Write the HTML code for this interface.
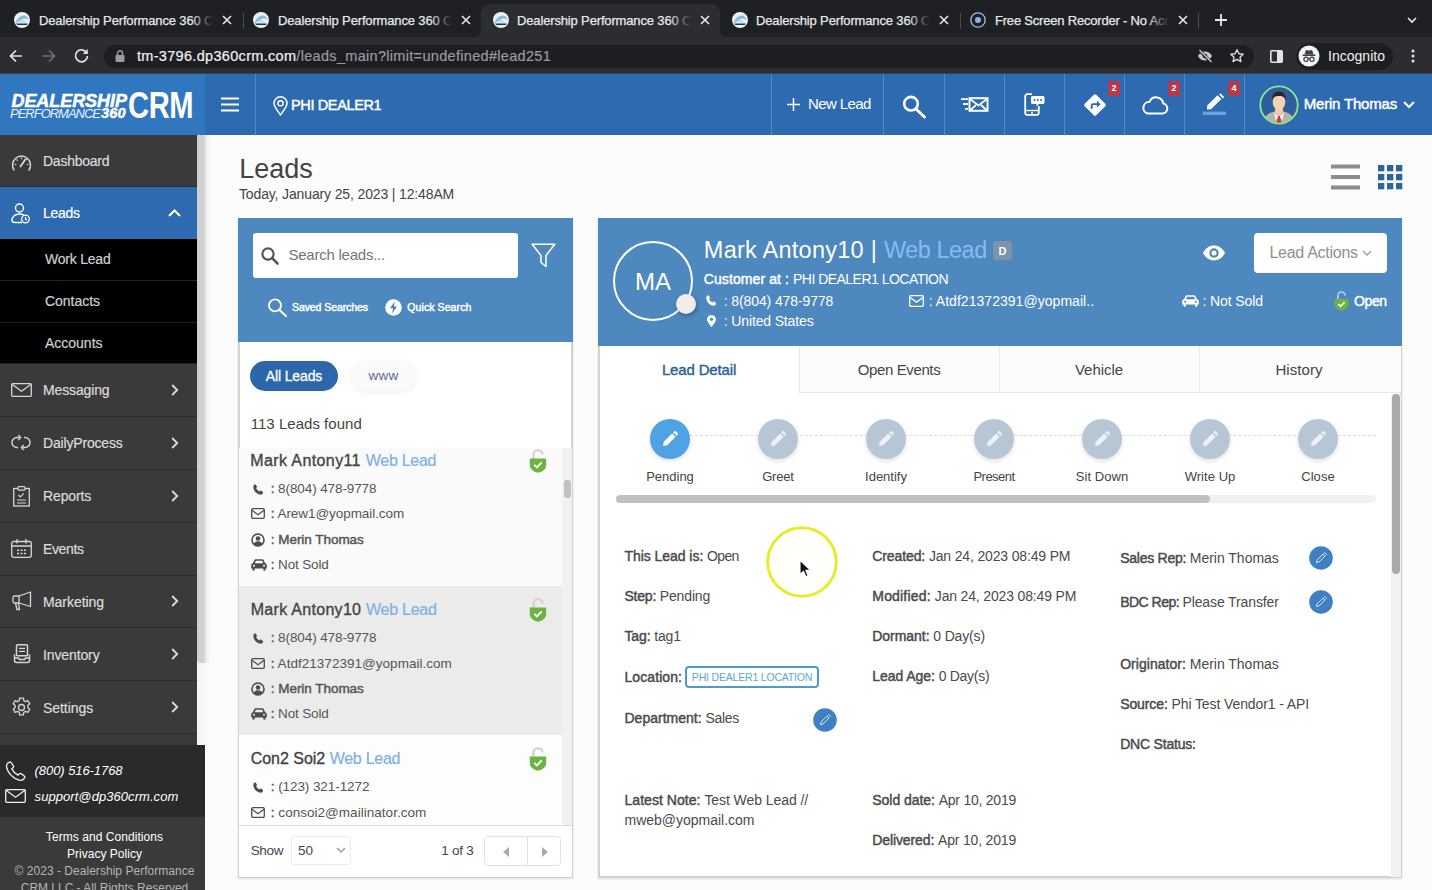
<!DOCTYPE html>
<html lang="en">
<head>
<meta charset="utf-8">
<title>Dealership Performance 360 CRM</title>
<style>
*{box-sizing:border-box;margin:0;padding:0}
html,body{width:1432px;height:890px;overflow:hidden;background:#fcfcfc;font-family:"Liberation Sans",sans-serif;color:#444}
.abs{position:absolute}
.t{position:absolute;white-space:nowrap;line-height:20px}
b,.b{font-weight:normal;-webkit-text-stroke:.45px currentColor}
svg{position:absolute;overflow:visible}
/* ---------- browser chrome ---------- */
#chrome{position:absolute;left:0;top:0;width:1432px;height:74px;background:#1f2023}
#toolbar{position:absolute;left:0;top:37px;width:1432px;height:37px;background:#2c2d30}
#acttab{position:absolute;left:481px;top:4px;width:239px;height:34px;background:#2c2d30;border-radius:9px 9px 0 0}
#omni{position:absolute;left:104px;top:45px;width:1150px;height:23px;background:#1d1e21;border-radius:12px}
.tabt{color:#e8e8ea;font-size:13px;top:11px}
.fade{position:absolute;top:8px;width:26px;height:26px}
.tsep{position:absolute;top:13px;width:1px;height:16px;background:#4a4b4f}
/* ---------- app header ---------- */
#hdr{z-index:5;position:absolute;left:0;top:74px;width:1432px;height:61px;background:#2d6ab0}
#logo{position:absolute;left:0;top:0;width:205px;height:61px;background:#3177c0}
.hsep{position:absolute;top:0;width:1px;height:61px;background:#5688c2}
.badge{position:absolute;width:12px;height:15px;background:#b5394b;color:#fff;font-size:9px;font-weight:bold;text-align:center;line-height:15px;border-radius:1px}
/* ---------- sidebar ---------- */
#side{position:absolute;left:0;top:134px;width:197px;height:611px;background:#3a3a3a;overflow:hidden}
.mi{position:absolute;left:0;width:197px;height:53px;border-bottom:1px solid #2c2c2c;color:#dcdcdc;font-size:14px}
.mi span{position:absolute;left:43px;top:17px;line-height:18px;-webkit-text-stroke:.2px currentColor}
.sub{position:absolute;left:0;width:197px;height:42px;background:#000;border-bottom:1px solid #222;color:#cfcfcf;font-size:14px}
.sub span{position:absolute;left:45px;top:11px;line-height:18px;-webkit-text-stroke:.2px currentColor}
</style>
</head>
<body>
<!-- ================= BROWSER CHROME ================= -->
<div id="chrome">
  <div id="acttab"></div><div id="toolbar"></div><div class="abs" style="left:0;top:73px;width:1432px;height:1px;background:#404145"></div><div id="omni"></div>
  <svg style="left:473px;top:30px" width="8" height="8" viewBox="0 0 8 8"><path d="M8 0v8H0c4.4 0 8-3.600 8-8z" fill="#2c2d30"/></svg>
  <svg style="left:720px;top:30px" width="8" height="8" viewBox="0 0 8 8"><path d="M0 0v8h8C3.600 8 0 4.400 0 0z" fill="#2c2d30"/></svg>
  <svg style="left:14px;top:12px" width="16" height="16" viewBox="0 0 16 16"><circle cx="8" cy="8" r="8" fill="#e9f1f5"/><path d="M1.2 11.5C3 6.5 6 3.6 9.6 3.4c2.6 0 4.6 2 5.4 5.2-1.6-2-3.6-2.6-5.6-1.8C7 7.8 4.6 9.6 1.2 11.5z" fill="#7fbfd8"/><path d="M2.2 11.6h11.6l-1 1.3H3.3z" fill="#2a3440"/><path d="M4 10.6c1.4-1.6 3-2.4 4.6-2.4 1.6 0 2.8.8 3.6 2.4z" fill="#b9dbe8"/></svg>
  <div class="t tabt" id="tab0" style="left:39px;width:173px;overflow:hidden;-webkit-text-stroke:.25px #e8e8ea;letter-spacing:-.15px">Dealership Performance 360 CRM</div>
  <div class="fade" style="left:191px;background:linear-gradient(90deg,rgba(31,32,35,0),rgba(31,32,35,1) 85%)"></div>
  <svg style="left:222px;top:15px" width="10" height="10" viewBox="0 0 10 10"><path d="M1 1l8 8M9 1l-8 8" stroke="#e8e8ea" stroke-width="1.6" fill="none"/></svg>
  <svg style="left:253px;top:12px" width="16" height="16" viewBox="0 0 16 16"><circle cx="8" cy="8" r="8" fill="#e9f1f5"/><path d="M1.2 11.5C3 6.5 6 3.6 9.6 3.4c2.6 0 4.6 2 5.4 5.2-1.6-2-3.6-2.6-5.6-1.8C7 7.8 4.6 9.6 1.2 11.5z" fill="#7fbfd8"/><path d="M2.2 11.6h11.6l-1 1.3H3.3z" fill="#2a3440"/><path d="M4 10.6c1.4-1.6 3-2.4 4.6-2.4 1.6 0 2.8.8 3.6 2.4z" fill="#b9dbe8"/></svg>
  <div class="t tabt" id="tab1" style="left:278px;width:173px;overflow:hidden;-webkit-text-stroke:.25px #e8e8ea;letter-spacing:-.15px">Dealership Performance 360 CRM</div>
  <div class="fade" style="left:430px;background:linear-gradient(90deg,rgba(31,32,35,0),rgba(31,32,35,1) 85%)"></div>
  <svg style="left:461px;top:15px" width="10" height="10" viewBox="0 0 10 10"><path d="M1 1l8 8M9 1l-8 8" stroke="#e8e8ea" stroke-width="1.6" fill="none"/></svg>
  <svg style="left:493px;top:12px" width="16" height="16" viewBox="0 0 16 16"><circle cx="8" cy="8" r="8" fill="#e9f1f5"/><path d="M1.2 11.5C3 6.5 6 3.6 9.6 3.4c2.6 0 4.6 2 5.4 5.2-1.6-2-3.6-2.6-5.6-1.8C7 7.8 4.6 9.6 1.2 11.5z" fill="#7fbfd8"/><path d="M2.2 11.6h11.6l-1 1.3H3.3z" fill="#2a3440"/><path d="M4 10.6c1.4-1.6 3-2.4 4.6-2.4 1.6 0 2.8.8 3.6 2.4z" fill="#b9dbe8"/></svg>
  <div class="t tabt" id="tab2" style="left:517px;width:173px;overflow:hidden;-webkit-text-stroke:.25px #e8e8ea;letter-spacing:-.15px">Dealership Performance 360 CRM</div>
  <div class="fade" style="left:669px;background:linear-gradient(90deg,rgba(44,45,48,0),rgba(44,45,48,1) 85%)"></div>
  <svg style="left:700px;top:15px" width="10" height="10" viewBox="0 0 10 10"><path d="M1 1l8 8M9 1l-8 8" stroke="#e8e8ea" stroke-width="1.6" fill="none"/></svg>
  <svg style="left:732px;top:12px" width="16" height="16" viewBox="0 0 16 16"><circle cx="8" cy="8" r="8" fill="#e9f1f5"/><path d="M1.2 11.5C3 6.5 6 3.6 9.6 3.4c2.6 0 4.6 2 5.4 5.2-1.6-2-3.6-2.6-5.6-1.8C7 7.8 4.6 9.6 1.2 11.5z" fill="#7fbfd8"/><path d="M2.2 11.6h11.6l-1 1.3H3.3z" fill="#2a3440"/><path d="M4 10.6c1.4-1.6 3-2.4 4.6-2.4 1.6 0 2.8.8 3.6 2.4z" fill="#b9dbe8"/></svg>
  <div class="t tabt" id="tab3" style="left:756px;width:173px;overflow:hidden;-webkit-text-stroke:.25px #e8e8ea;letter-spacing:-.15px">Dealership Performance 360 CRM</div>
  <div class="fade" style="left:908px;background:linear-gradient(90deg,rgba(31,32,35,0),rgba(31,32,35,1) 85%)"></div>
  <svg style="left:939px;top:15px" width="10" height="10" viewBox="0 0 10 10"><path d="M1 1l8 8M9 1l-8 8" stroke="#e8e8ea" stroke-width="1.6" fill="none"/></svg>
  <svg style="left:970px;top:12px" width="16" height="16" viewBox="0 0 16 16"><circle cx="8" cy="8" r="7.2" fill="#1f2023" stroke="#9fc3ea" stroke-width="1.3"/><circle cx="8" cy="8" r="3" fill="#8ab4e8"/></svg>
  <div class="t tabt" id="tab4" style="left:995px;width:176px;overflow:hidden;-webkit-text-stroke:.25px #e8e8ea;letter-spacing:-.2px">Free Screen Recorder - No Account</div>
  <div class="fade" style="left:1147px;background:linear-gradient(90deg,rgba(31,32,35,0),rgba(31,32,35,1) 85%)"></div>
  <svg style="left:1178px;top:15px" width="10" height="10" viewBox="0 0 10 10"><path d="M1 1l8 8M9 1l-8 8" stroke="#e8e8ea" stroke-width="1.6" fill="none"/></svg>
  <div class="tsep" style="left:243px"></div>
  <div class="tsep" style="left:960px"></div>
  <div class="tsep" style="left:1198px"></div>
  <svg style="left:1215px;top:14px" width="12" height="12" viewBox="0 0 12 12"><path d="M6 0v12M0 6h12" stroke="#e8e8ea" stroke-width="1.8" fill="none"/></svg>
  <svg style="left:1407px;top:17px" width="10" height="7" viewBox="0 0 10 7"><path d="M1 1l4 4 4-4" stroke="#e8e8ea" stroke-width="1.6" fill="none"/></svg>
  <svg style="left:9px;top:49px" width="14" height="14" viewBox="0 0 14 14"><path d="M13 7H2M7 1.500L1.500 7 7 12.500" stroke="#e4e4e6" stroke-width="1.7" fill="none"/></svg>
  <svg style="left:42px;top:49px" width="14" height="14" viewBox="0 0 14 14"><path d="M1 7h11M7 1.500L12.500 7 7 12.500" stroke="#6e6f73" stroke-width="1.7" fill="none"/></svg>
  <svg style="left:74px;top:48px" width="15" height="15" viewBox="0 0 15 15"><path d="M12.600 4.600A6 6 0 1 0 13.500 8" stroke="#e4e4e6" stroke-width="1.7" fill="none"/><path d="M13.800 1v5h-5z" fill="#e4e4e6"/></svg>
  <svg style="left:115px;top:50px" width="10" height="12" viewBox="0 0 10 12"><rect x="0.500" y="5" width="9" height="7" rx="1" fill="#9a9ba0"/><path d="M2.500 5V3.300a2.500 2.500 0 0 1 5 0V5" stroke="#9a9ba0" stroke-width="1.400" fill="none"/></svg>
  <div class="t" id="url" style="left:137.0px;top:46px;font-size:14.500px;color:#f1f1f2;-webkit-text-stroke:.2px currentColor;letter-spacing:0.31px">tm-3796.dp360crm.com<span style="color:#9a9ba0">/leads_main?limit=undefined#lead251</span></div>
  <svg style="left:1197px;top:49px" width="16" height="14" viewBox="0 0 16 14"><path d="M1 7c1.600-3 4-4.500 7-4.500S13.400 4 15 7c-1.600 3-4 4.500-7 4.500S2.600 10 1 7z" fill="#c8c9cc"/><circle cx="8" cy="7" r="2.300" fill="#1d1e21"/><path d="M2 1l12 12" stroke="#1d1e21" stroke-width="3"/><path d="M2.500 1l12 12" stroke="#c8c9cc" stroke-width="1.400"/></svg>
  <svg style="left:1229px;top:48px" width="16" height="16" viewBox="0 0 16 16"><path d="M8 1.800l1.900 4 4.300.5-3.200 3 .9 4.300L8 11.400l-3.900 2.200.9-4.300-3.200-3 4.300-.5z" stroke="#dcdde0" stroke-width="1.400" fill="none" stroke-linejoin="round"/></svg>
  <svg style="left:1270px;top:50px" width="13" height="13" viewBox="0 0 13 13"><rect x="0.800" y="0.800" width="11.400" height="11.400" rx="1" stroke="#e4e4e6" stroke-width="1.600" fill="none"/><rect x="7" y="1" width="5" height="11" fill="#e4e4e6"/></svg>
  <div class="abs" style="left:1296px;top:43px;width:97px;height:27px;border-radius:14px;background:#1d1e21"></div>
  <svg style="left:1298px;top:45px" width="22" height="22" viewBox="0 0 22 22"><circle cx="11" cy="11" r="10.500" fill="#f1f3f4"/><path d="M6.500 9.500l1.300-4c.2-.5.700-.7 1.200-.5l2 .7 2-.7c.5-.2 1 0 1.200.5l1.300 4z" fill="#3c4043"/><rect x="4.500" y="9.600" width="13" height="1.300" rx=".6" fill="#3c4043"/><circle cx="8" cy="14.200" r="2.100" stroke="#3c4043" stroke-width="1.200" fill="none"/><circle cx="14" cy="14.200" r="2.100" stroke="#3c4043" stroke-width="1.200" fill="none"/><path d="M10 14c.6-.5 1.400-.5 2 0" stroke="#3c4043" stroke-width="1.100" fill="none"/></svg>
  <div class="t" id="incog" style="left:1328.0px;top:46px;font-size:14px;color:#f1f1f2;letter-spacing:0.02px">Incognito</div>
  <svg style="left:1411px;top:49px" width="4" height="14" viewBox="0 0 4 14"><circle cx="2" cy="2" r="1.500" fill="#e4e4e6"/><circle cx="2" cy="7" r="1.500" fill="#e4e4e6"/><circle cx="2" cy="12" r="1.500" fill="#e4e4e6"/></svg>
</div>
<!-- ================= APP HEADER ================= -->
<div id="hdr">
  <div id="logo"></div>
  <div class="t" id="lg1" style="left:11.5px;font-weight:bold;font-style:italic;color:#fff;font-size:18px;top:18px;line-height:18px;-webkit-text-stroke:.5px #fff;letter-spacing:-0.07px">DEALERSHIP</div>
  <div class="t" id="lg2" style="left:10.0px;line-height:13px;font-style:italic;color:#e6f0fa;font-size:13px;top:33px;letter-spacing:-1.01px">PERFORMANCE</div>
  <div class="t" id="lg3" style="line-height:13px;font-weight:bold;font-style:italic;color:#fff;font-size:14.5px;top:32.5px;left:101.0px;-webkit-text-stroke:.5px #fff;letter-spacing:0.17px">360</div>
    <div class="t" id="lgcrm" style="font-size:36px;line-height:36px;color:#fff;transform-origin:0 0;font-weight:bold;top:14px;left:128px;transform:scaleX(.81);letter-spacing:-.5px">CRM</div>
  <svg style="left:221px;top:23px" width="18" height="15" viewBox="0 0 18 15"><path d="M0 1.500h18M0 7.500h18M0 13.500h18" stroke="#fff" stroke-width="2"/></svg>
  <div class="hsep" style="left:255px"></div>
  <div class="hsep" style="left:771px"></div>
  <div class="hsep" style="left:883px"></div>
  <div class="hsep" style="left:944px"></div>
  <div class="hsep" style="left:1004px"></div>
  <div class="hsep" style="left:1064px"></div>
  <div class="hsep" style="left:1124px"></div>
  <div class="hsep" style="left:1184px"></div>
  <div class="hsep" style="left:1244px"></div>
  <svg style="left:273px;top:22px" width="15" height="20" viewBox="0 0 15 20"><path d="M7.500 18.800C4 14 1 10.800 1 7.300a6.500 6.500 0 0 1 13 0c0 3.500-3 6.700-6.500 11.500z" stroke="#fff" stroke-width="1.500" fill="none"/><circle cx="7.500" cy="7.300" r="2.600" stroke="#fff" stroke-width="1.400" fill="none"/></svg>
  <div class="t" id="dealer" style="left:291.0px;top:21px;color:#fff;-webkit-text-stroke:.45px currentColor;font-size:14.5px;letter-spacing:-0.36px">PHI DEALER1</div>
  <svg style="left:787px;top:24px" width="13" height="13" viewBox="0 0 13 13"><path d="M6.500 0v13M0 6.500h13" stroke="#fff" stroke-width="1.500"/></svg>
  <div class="t" id="newlead" style="left:808.0px;top:20px;color:#fff;font-size:15px;letter-spacing:-0.59px">New Lead</div>
  <svg style="left:900px;top:19px" width="28" height="28" viewBox="0 0 28 28"><circle cx="11" cy="10.700" r="6.800" stroke="#fff" stroke-width="2.600" fill="none"/><path d="M16 16l8.500 8" stroke="#fff" stroke-width="3" stroke-linecap="round"/></svg>
  <svg style="left:960px;top:23px" width="29" height="15" viewBox="0 0 29 15"><rect x="9.500" y="1.200" width="18" height="12.600" stroke="#fff" stroke-width="2" fill="none"/><path d="M10 2l8.500 6.500L27 2M10 13.500l6-5.500M27 13.500L21 8" stroke="#fff" stroke-width="1.700" fill="none"/><path d="M1 2.200h7M3 7h5M5 11.800h3" stroke="#fff" stroke-width="1.800"/></svg>
  <svg style="left:1024px;top:19px" width="22" height="23" viewBox="0 0 22 23"><path d="M8 1.200H3.200a2 2 0 0 0-2 2v16.600a2 2 0 0 0 2 2h9.600a2 2 0 0 0 2-2V13" stroke="#fff" stroke-width="1.800" fill="none"/><path d="M1.500 17.500h13" stroke="#fff" stroke-width="1.400"/><circle cx="8" cy="19.800" r="1" fill="#fff"/><path d="M8.500 3h10.500a1.500 1.500 0 0 1 1.500 1.500v5a1.500 1.500 0 0 1-1.500 1.500H15l-2.500 2.600V11H8.500A1.500 1.500 0 0 1 7 9.500v-5A1.500 1.500 0 0 1 8.500 3z" fill="#fff"/><circle cx="10.500" cy="7" r="1" fill="#2d6ab0"/><circle cx="13.800" cy="7" r="1" fill="#2d6ab0"/><circle cx="17.100" cy="7" r="1" fill="#2d6ab0"/></svg>
  <svg style="left:1083px;top:19px" width="24" height="24" viewBox="0 0 22 22"><rect x="3.600" y="3.600" width="14.800" height="14.800" rx="1.500" transform="rotate(45 11 11)" fill="#fff"/><path d="M8 14.500v-3.300a1 1 0 0 1 1-1h4.500" stroke="#2d6ab0" stroke-width="1.800" fill="none"/><path d="M12.800 7.200l3.400 3-3.400 3z" fill="#2d6ab0"/></svg>
  <div class="badge" style="left:1108px;top:7px">2</div>
  <svg style="left:1140px;top:21px" width="29" height="20" viewBox="0 0 29 20"><path d="M7.500 18.500h15a5 5 0 0 0 .8-9.900 7.200 7.200 0 0 0-13.800-1.800A6 6 0 0 0 7.500 18.500z" stroke="#fff" stroke-width="2" fill="none" stroke-linejoin="round"/></svg>
  <div class="badge" style="left:1168px;top:7px">2</div>
  <svg style="left:1203px;top:19px" width="23" height="23" viewBox="0 0 23 23"><path d="M4 16.500l.2-4L14.500 2.200l3.800 3.800L8 16.300z" fill="#fff"/><path d="M15.500 1.200l1.300-1.200 3.800 3.800-1.300 1.300z" fill="#fff" transform="translate(.6 .3)"/><rect x="0" y="18.600" width="23" height="3.400" fill="#6ea2d8"/></svg>
  <div class="badge" style="left:1228px;top:7px">4</div>
  <svg style="left:1259px;top:11px" width="40" height="40" viewBox="0 0 40 40"><defs><clipPath id="avc"><circle cx="20" cy="20" r="18.200"/></clipPath></defs><circle cx="20" cy="20" r="18.200" fill="#2d5f9e"/><g clip-path="url(#avc)"><path d="M4 40c0-8 5-12 11-13.500h10C31 28 36 32 36 40z" fill="#b9b3ad"/><path d="M16 26.500l4 5 4-5v-3h-8z" fill="#f1c9a5"/><path d="M15 27l5 5-3.500 3zM25 27l-5 5 3.500 3z" fill="#f4f4f4"/><path d="M19 31h2l1.200 7H17.800z" fill="#d33a2c"/><ellipse cx="20" cy="17" rx="6.300" ry="8" fill="#f6d2b0"/><path d="M13.300 15.500c-.6-6 2.500-9 6.700-9s7.300 3 6.700 9c-1-3-2-4.500-6.700-4.500s-5.700 1.500-6.700 4.500z" fill="#2b2523"/></g><circle cx="20" cy="20" r="18.700" stroke="#8ee88a" stroke-width="1.800" fill="none"/></svg>
  <div class="t" id="user" style="left:1303.7px;top:20px;color:#fff;-webkit-text-stroke:.45px currentColor;font-size:15px;letter-spacing:-0.19px">Merin Thomas</div>
  <svg style="left:1403px;top:27px" width="12" height="8" viewBox="0 0 12 8"><path d="M1 1l5 5 5-5" stroke="#fff" stroke-width="2" fill="none"/></svg>
</div>
<!-- ================= SIDEBAR ================= -->
<div id="side">
  <div class="mi" style="top:0px;height:53px"><span id="mi_dash" style="top:18px;letter-spacing:-0.25px">Dashboard</span></div>
  <svg style="left:11px;top:20px" width="21" height="18" viewBox="0 0 21 18"><path d="M3.300 16.500A9 9 0 1 1 17.700 16.500" stroke="#d6d6d6" stroke-width="1.500" fill="none"/><path d="M9.500 12.500l4.800-7" stroke="#d6d6d6" stroke-width="1.800" stroke-linecap="round"/><path d="M3.500 10.500h1.800M15.700 10.500h1.800M10.500 3.500v1.700M5.500 5.500l1.200 1.200M15.800 5.200l-.6.600" stroke="#d6d6d6" stroke-width="1.200"/></svg>
  <div class="mi" style="top:53px;height:52px;background:#2d6ab0;color:#fff;border-bottom-color:#2d6ab0"><span id="mi_leads" style="top:17px;letter-spacing:-0.27px">Leads</span></div>
  <svg style="left:11px;top:69px" width="20" height="21" viewBox="0 0 20 21"><circle cx="8.500" cy="5" r="4" stroke="#fff" stroke-width="1.400" fill="none"/><path d="M11 19.500H3.500C2 19.500 1 18.600 1 17.300c0-3.600 3.200-6.300 7.500-6.300 1.600 0 3 .4 4.200 1" stroke="#fff" stroke-width="1.400" fill="none"/><circle cx="14.500" cy="16" r="3.800" stroke="#fff" stroke-width="1.300" fill="none"/><path d="M14.500 14v2.300l1.500.9" stroke="#fff" stroke-width="1.200" fill="none"/></svg>
  <div class="mi" style="top:230px;height:53px"><span id="mi_msg" style="top:17px;letter-spacing:-0.14px">Messaging</span></div>
  <svg style="left:11px;top:249px" width="21" height="14" viewBox="0 0 21 14"><rect x=".700" y=".700" width="19.600" height="12.600" rx="1" stroke="#d6d6d6" stroke-width="1.300" fill="none"/><path d="M1 1.200l9.500 7 9.500-7" stroke="#d6d6d6" stroke-width="1.300" fill="none"/></svg>
  <svg style="left:171px;top:250px" width="8" height="12" viewBox="0 0 8 12"><path d="M1.200 1l5 5-5 5" stroke="#dcdcdc" stroke-width="1.800" fill="none"/></svg>
  <div class="mi" style="top:283px;height:53px"><span id="mi_daily" style="top:17px;letter-spacing:-0.17px">DailyProcess</span></div>
  <svg style="left:11px;top:300px" width="20" height="18" viewBox="0 0 20 18"><path d="M8.500 3.500H6a5 5 0 0 0 0 10h1M11.500 13.500H14a5 5 0 0 0 0-10h-1" stroke="#d6d6d6" stroke-width="1.400" fill="none"/><path d="M7.300 1l2.400 2.500-2.400 2.500M12.700 11l-2.400 2.500 2.400 2.500" stroke="#d6d6d6" stroke-width="1.300" fill="none"/></svg>
  <svg style="left:171px;top:303px" width="8" height="12" viewBox="0 0 8 12"><path d="M1.200 1l5 5-5 5" stroke="#dcdcdc" stroke-width="1.800" fill="none"/></svg>
  <div class="mi" style="top:336px;height:53px"><span id="mi_rep" style="top:17px;letter-spacing:-0.13px">Reports</span></div>
  <svg style="left:13px;top:352px" width="17" height="21" viewBox="0 0 17 21"><rect x=".700" y="2.500" width="15.600" height="17.500" stroke="#d6d6d6" stroke-width="1.300" fill="none"/><rect x="5" y=".700" width="7" height="3.500" rx="1" stroke="#d6d6d6" stroke-width="1.200" fill="#3a3a3a"/><path d="M5.500 9l1.800 1.800 3.500-3.500M4 14h9M4 17h9" stroke="#d6d6d6" stroke-width="1.200" fill="none"/></svg>
  <svg style="left:171px;top:356px" width="8" height="12" viewBox="0 0 8 12"><path d="M1.200 1l5 5-5 5" stroke="#dcdcdc" stroke-width="1.800" fill="none"/></svg>
  <div class="mi" style="top:389px;height:53px"><span id="mi_evt" style="top:17px;letter-spacing:-0.37px">Events</span></div>
  <svg style="left:11px;top:405px" width="21" height="19" viewBox="0 0 21 19"><rect x=".700" y="2.500" width="19.600" height="15.800" rx="2" stroke="#d6d6d6" stroke-width="1.300" fill="none"/><path d="M1 7h19M6 0v4.500M15 0v4.500" stroke="#d6d6d6" stroke-width="1.300"/><path d="M6 10.500h2v1.500H6zM9.500 10.500h2v1.500h-2zM13 10.500h2v1.500h-2zM6 13.800h2v1.500H6zM9.500 13.800h2v1.500h-2zM13 13.800h2v1.500h-2z" fill="#d6d6d6"/></svg>
  <div class="mi" style="top:442px;height:52px"><span id="mi_mkt" style="top:17.0px;letter-spacing:-0.04px">Marketing</span></div>
  <svg style="left:11px;top:457px" width="21" height="20" viewBox="0 0 21 20"><path d="M19.500 1v14.500L8 12H3.500A1.500 1.500 0 0 1 2 10.500v-4A1.500 1.500 0 0 1 3.500 5H8z" stroke="#d6d6d6" stroke-width="1.300" fill="none" stroke-linejoin="round"/><path d="M8 5v7M4.500 12l1.500 6.500h2.500L7.500 12" stroke="#d6d6d6" stroke-width="1.300" fill="none"/></svg>
  <svg style="left:171px;top:461px" width="8" height="12" viewBox="0 0 8 12"><path d="M1.200 1l5 5-5 5" stroke="#dcdcdc" stroke-width="1.800" fill="none"/></svg>
  <div class="mi" style="top:494px;height:53px"><span id="mi_inv" style="top:18.0px;letter-spacing:-0.12px">Inventory</span></div>
  <svg style="left:13px;top:510px" width="18" height="20" viewBox="0 0 18 20"><rect x="3.500" y=".800" width="11" height="11" rx="1" stroke="#d6d6d6" stroke-width="1.500" fill="none"/><path d="M6 4.300h6M6 7.300h6" stroke="#d6d6d6" stroke-width="1.300"/><path d="M1.500 10.500v6a2 2 0 0 0 2 2h11a2 2 0 0 0 2-2v-6M1.500 14h4l1 1.500h5l1-1.500h4" stroke="#d6d6d6" stroke-width="1.500" fill="none"/></svg>
  <svg style="left:171px;top:514px" width="8" height="12" viewBox="0 0 8 12"><path d="M1.200 1l5 5-5 5" stroke="#dcdcdc" stroke-width="1.800" fill="none"/></svg>
  <div class="mi" style="top:547px;height:53px"><span id="mi_set" style="top:18.0px;letter-spacing:-0.06px">Settings</span></div>
  <svg style="left:11px;top:563px" width="21" height="21" viewBox="0 0 21 21"><path d="M8.600 1.200h3.800l.5 2.600 1.500.8 2.400-1 2 3.200-2 1.700v2l2 1.700-2 3.200-2.400-1-1.500.8-.5 2.600H8.600l-.5-2.600-1.500-.8-2.400 1-2-3.200 2-1.700v-2l-2-1.700 2-3.200 2.400 1 1.500-.8z" stroke="#d6d6d6" stroke-width="1.300" fill="none" stroke-linejoin="round"/><circle cx="10.500" cy="10.500" r="3" stroke="#d6d6d6" stroke-width="1.300" fill="none"/></svg>
  <svg style="left:171px;top:567px" width="8" height="12" viewBox="0 0 8 12"><path d="M1.200 1l5 5-5 5" stroke="#dcdcdc" stroke-width="1.800" fill="none"/></svg>
  <svg style="left:168px;top:75px" width="13" height="8" viewBox="0 0 13 8"><path d="M1 7l5.500-5.500L12 7" stroke="#fff" stroke-width="2" fill="none"/></svg>
  <div class="sub" style="top:105px;height:42px"><span id="sub0" style=";letter-spacing:-0.22px">Work Lead</span></div>
  <div class="sub" style="top:147px;height:42px"><span id="sub1" style=";letter-spacing:-0.03px">Contacts</span></div>
  <div class="sub" style="top:189px;height:41px"><span id="sub2" style=";letter-spacing:-0.01px">Accounts</span></div>
  <div class="mi" style="top:600px;height:20px;border:0"></div>
</div>
<div class="abs" style="left:197px;top:134px;width:16px;height:611px;background:linear-gradient(90deg,#f4f4f4,#f8f8f8 8px,#fcfcfc 16px)"></div>
<div class="abs" style="left:197px;top:135px;width:14px;height:528px;background:linear-gradient(90deg,#cfcfcf,#d3d3d3 7px,#ececec 9px,#fcfcfc 14px);border-radius:0 0 4px 4px"></div>
<div class="abs" id="contact" style="left:0;top:745px;width:205px;height:72px;background:#2a2a2a"></div>
<svg style="left:5px;top:761px" width="21" height="21" viewBox="0 0 21 21"><path d="M4.500 1.200C3 1.800 1.200 3.400 1.500 5.600c.8 6 7.400 12.800 13.600 13.700 2.200.3 3.800-1.200 4.600-2.800.3-.6.100-1.200-.4-1.600l-3.200-2.300c-.6-.4-1.300-.3-1.800.2l-1.300 1.400c-2.500-1.300-4.900-3.700-6.200-6.300l1.400-1.300c.5-.5.600-1.200.2-1.800L6.200 1.600c-.4-.5-1.100-.700-1.700-.4z" stroke="#eee" stroke-width="1.300" fill="none"/></svg>
<svg style="left:5px;top:789px" width="21" height="14" viewBox="0 0 21 14"><rect x=".700" y=".700" width="19.600" height="12.600" rx="1" stroke="#eee" stroke-width="1.300" fill="none"/><path d="M1 1.200l9.500 7 9.500-7" stroke="#eee" stroke-width="1.300" fill="none"/></svg>
<div class="t" id="ph" style="left:34.6px;top:761.0px;font-style:italic;color:#fff;font-size:13px;letter-spacing:-0.07px">(800) 516-1768</div>
<div class="t" id="em" style="left:34.6px;top:787.0px;font-style:italic;color:#fff;font-size:13px;letter-spacing:0.06px">support@dp360crm.com</div>
<div class="abs" id="foot" style="left:0;top:817px;width:205px;height:73px;background:#3a3a3a"></div>
<div class="t" id="f1" style="left:0;top:829.0px;width:209px;text-align:center;line-height:17px;color:#fff;font-size:12px;letter-spacing:0.06px">Terms and Conditions</div>
<div class="t" id="f2" style="left:0;top:846.0px;width:209px;text-align:center;line-height:17px;color:#fff;font-size:12px;letter-spacing:0.01px">Privacy Policy</div>
<div class="t" id="f3" style="left:0;top:863.0px;width:209px;text-align:center;line-height:17px;color:#b5b5b5;font-size:12px;letter-spacing:0.03px">© 2023 - Dealership Performance</div>
<div class="t" id="f4" style="left:0;top:880.0px;width:209px;text-align:center;line-height:17px;color:#b5b5b5;font-size:12px;letter-spacing:-0.02px">CRM LLC - All Rights Reserved</div>
<!-- ================= MAIN ================= -->
<div id="main">
  <div class="t" id="h1" style="left:239.2px;top:152px;line-height:34px;color:#444;font-size:27px;letter-spacing:-0.01px">Leads</div>
  <div class="t" id="h2" style="left:239.0px;top:185px;font-size:14px;line-height:18px;color:#444;letter-spacing:-0.14px">Today, January 25, 2023 | 12:48AM</div>
  <svg style="left:1331px;top:164px" width="29" height="26" viewBox="0 0 29 26"><path d="M0 2.500h29M0 13h29M0 23.500h29" stroke="#8c8c8c" stroke-width="4.200"/></svg>
  <svg style="left:1378px;top:165px" width="25" height="25" viewBox="0 0 25 25" fill="#2b62a0"><rect x="0" y="0" width="6.300" height="6.300"/><rect x="0" y="9" width="6.300" height="6.300"/><rect x="0" y="18" width="6.300" height="6.300"/><rect x="9" y="0" width="6.300" height="6.300"/><rect x="9" y="9" width="6.300" height="6.300"/><rect x="9" y="18" width="6.300" height="6.300"/><rect x="18" y="0" width="6.300" height="6.300"/><rect x="18" y="9" width="6.300" height="6.300"/><rect x="18" y="18" width="6.300" height="6.300"/></svg>
  <div class="abs" id="lp" style="left:238px;top:218px;width:335px;height:660px;background:#fff;border:2px solid #d2d2d2;border-top:0;box-shadow:0 1px 2px rgba(0,0,0,.12)"></div>
  <div class="abs" id="lph" style="left:238px;top:218px;width:335px;height:124px;background:#4d88bf"></div>
  <div class="abs" style="left:253px;top:233px;width:265px;height:45px;background:#fff;border-radius:3px"></div>
  <svg style="left:260px;top:246px" width="19" height="19" viewBox="0 0 19 19"><circle cx="8" cy="8" r="5.600" stroke="#555" stroke-width="2.200" fill="none"/><path d="M12.200 12.200l5.300 5.300" stroke="#555" stroke-width="2.600" stroke-linecap="round"/></svg>
  <div class="t" id="srch" style="left:288.4px;top:245px;color:#757575;font-size:15px;letter-spacing:-0.23px">Search leads...</div>
  <svg style="left:531px;top:243px" width="25" height="25" viewBox="0 0 25 25"><path d="M1.200 1.200h22.600L15 12.500v11L10 19.500v-7z" stroke="#fff" stroke-width="1.500" fill="none" stroke-linejoin="round"/></svg>
  <svg style="left:267px;top:297px" width="21" height="21" viewBox="0 0 21 21"><circle cx="8" cy="8.400" r="6" stroke="#fff" stroke-width="1.900" fill="none"/><path d="M12.500 13l6.500 6" stroke="#fff" stroke-width="2.200" stroke-linecap="round"/></svg>
  <div class="t" id="ss" style="left:292.0px;top:297px;color:#fff;-webkit-text-stroke:.45px currentColor;font-size:10.5px;letter-spacing:-0.08px">Saved Searches</div>
  <svg style="left:385px;top:299px" width="17" height="17" viewBox="0 0 17 17"><circle cx="8.500" cy="8.500" r="8.300" fill="#fff"/><path d="M9.800 2.500L5 9.300h3.200L7 14.500l5-7H8.800z" fill="#3f7dbb"/></svg>
  <div class="t" id="qs" style="left:407.3px;top:297px;color:#fff;-webkit-text-stroke:.45px currentColor;font-size:10.5px;letter-spacing:0.09px">Quick Search</div>
  <div class="abs" style="left:250px;top:361px;width:88px;height:30px;border-radius:15px;background:#2c67ab"></div>
  <div class="t" id="all" style="left:250px;top:366px;width:88px;text-align:center;font-size:14px;color:#fff;letter-spacing:-0.12px;-webkit-text-stroke:.3px #fff">All Leads</div>
  <div class="abs" style="left:352px;top:361px;width:63px;height:30px;border-radius:15px;background:#fafafa;box-shadow:0 1px 6px rgba(0,0,0,.07)"></div>
  <div class="t" id="www" style="left:352px;top:366px;width:63px;text-align:center;font-size:13.500px;color:#5a6b8e;letter-spacing:0.21px">www</div>
  <div class="t" id="found" style="left:250.7px;top:414px;font-size:15px;color:#444;letter-spacing:0.03px">113 Leads found</div>
  <div class="abs" style="left:239px;top:448px;width:323px;height:138px;background:#fafafa"></div>
  <div class="abs" style="left:239px;top:586px;width:323px;height:149px;background:#ebebeb"></div>
  <div class="abs" style="left:239px;top:735px;width:323px;height:90px;background:#fdfdfd"></div>
  <div class="abs" style="left:562px;top:448px;width:10px;height:377px;background:#f1f1f1"></div>
  <div class="abs" style="left:564px;top:480px;width:7px;height:18px;background:#c1c1c1;border-radius:3px"></div>
  <div class="t" id="n1" style="left:250.3px;top:451px;font-size:16px;color:#444;-webkit-text-stroke:.35px #444"><span id="n1_a" style=";letter-spacing:0.39px">Mark Antony11 </span><span id="n1_b" style="color:#7fb1e2;-webkit-text-stroke:.2px #7fb1e2;letter-spacing:-0.27px">Web Lead</span></div><svg style="left:529px;top:449px" width="18" height="24" viewBox="0 0 18 24"><path d="M4.500 10V6a4.500 4.500 0 0 1 9-.5" stroke="#cfcfcf" stroke-width="2.200" fill="none"/><path d="M.800 9.500h16.400V16c0 4-3.600 7-8.200 7.700C4.400 23 .800 20 .800 16z" fill="#6cb441"/><path d="M5.300 15.800l2.600 2.600 4.800-5" stroke="#fff" stroke-width="1.900" fill="none"/></svg>
  <svg style="left:253px;top:484px" width="11" height="11" viewBox="0 0 11 11"><path d="M2.300.300l1.900 2.500-1.100 1.300c.7 1.500 1.800 2.600 3.300 3.300l1.300-1.100 2.500 1.900c-.3 1.300-1.100 2.200-2.400 2.500C3.800 10.500.500 7.200.300 2.700.600 1.400 1.100.600 2.300.300z" fill="#4d4d4d"/></svg><div class="t" id="r11" style="left:270.8px;top:479px;font-size:13.500px;color:#555;letter-spacing:-0.1px"><b>:</b> 8(804) 478-9778</div>
  <svg style="left:251px;top:508px" width="14" height="11" viewBox="0 0 14 11"><rect x=".700" y=".700" width="12.600" height="9.600" rx="1.200" stroke="#4d4d4d" stroke-width="1.300" fill="none"/><path d="M1 2.300l6 4.400 6-4.400" stroke="#4d4d4d" stroke-width="1.300" fill="none"/></svg><div class="t" id="r12" style="left:270.8px;top:504px;font-size:13.500px;color:#555;letter-spacing:-0.06px"><b>:</b> Arew1@yopmail.com</div>
  <svg style="left:251px;top:533px" width="14" height="14" viewBox="0 0 14 14"><circle cx="7" cy="7" r="6" stroke="#4d4d4d" stroke-width="1.600" fill="none"/><circle cx="7" cy="5.500" r="2.300" fill="#4d4d4d"/><path d="M2.800 10.800c.8-1.800 2.400-2.500 4.200-2.500s3.400.7 4.200 2.500c-1 1.400-2.500 2.200-4.200 2.200s-3.200-.8-4.200-2.200z" fill="#4d4d4d"/></svg><div class="t" id="r13" style="left:270.8px;top:530px;font-size:13.500px;color:#555;-webkit-text-stroke:.45px currentColor;letter-spacing:-0.04px"><b>:</b> Merin Thomas</div>
  <svg style="left:251px;top:559px" width="16" height="12" viewBox="0 0 16 12"><path d="M3.200 1.200C3.500.500 4 .200 4.700.200h6.600c.7 0 1.200.3 1.500 1l1.300 3.100c1 .2 1.700 1 1.700 2v3.200h-1.300v1.300c0 .6-.5 1-1.100 1s-1.100-.4-1.100-1V9.500H3.700v1.300c0 .6-.5 1-1.100 1s-1.100-.4-1.100-1V9.500H.200V6.300c0-1 .7-1.800 1.700-2zM4.800 1.800l-1 2.500h8.400l-1-2.500zM3 7.800a1 1 0 1 0 0-2 1 1 0 0 0 0 2zM13 7.800a1 1 0 1 0 0-2 1 1 0 0 0 0 2z" fill="#4d4d4d" fill-rule="evenodd"/></svg><div class="t" id="r14" style="left:270.8px;top:555px;font-size:13.500px;color:#555;letter-spacing:-0.14px"><b>:</b> Not Sold</div>
  <div class="t" id="n2" style="left:250.7px;top:600px;font-size:16px;color:#444;-webkit-text-stroke:.35px #444"><span id="n2_a" style=";letter-spacing:0.3px">Mark Antony10 </span><span id="n2_b" style="color:#7fb1e2;-webkit-text-stroke:.2px #7fb1e2;letter-spacing:-0.27px">Web Lead</span></div><svg style="left:529px;top:598px" width="18" height="24" viewBox="0 0 18 24"><path d="M4.500 10V6a4.500 4.500 0 0 1 9-.5" stroke="#cfcfcf" stroke-width="2.200" fill="none"/><path d="M.800 9.500h16.400V16c0 4-3.600 7-8.200 7.700C4.400 23 .800 20 .800 16z" fill="#6cb441"/><path d="M5.300 15.800l2.600 2.600 4.800-5" stroke="#fff" stroke-width="1.900" fill="none"/></svg>
  <svg style="left:253px;top:633px" width="11" height="11" viewBox="0 0 11 11"><path d="M2.300.300l1.900 2.500-1.100 1.300c.7 1.500 1.800 2.600 3.300 3.300l1.300-1.100 2.500 1.900c-.3 1.300-1.100 2.200-2.400 2.500C3.800 10.500.500 7.200.300 2.700.600 1.400 1.100.600 2.300.300z" fill="#4d4d4d"/></svg><div class="t" id="r21" style="left:270.8px;top:628px;font-size:13.500px;color:#555;letter-spacing:-0.1px"><b>:</b> 8(804) 478-9778</div>
  <svg style="left:251px;top:658px" width="14" height="11" viewBox="0 0 14 11"><rect x=".700" y=".700" width="12.600" height="9.600" rx="1.200" stroke="#4d4d4d" stroke-width="1.300" fill="none"/><path d="M1 2.300l6 4.400 6-4.400" stroke="#4d4d4d" stroke-width="1.300" fill="none"/></svg><div class="t" id="r22" style="left:270.8px;top:654px;font-size:13.500px;color:#555;letter-spacing:0.03px"><b>:</b> Atdf21372391@yopmail.com</div>
  <svg style="left:251px;top:682px" width="14" height="14" viewBox="0 0 14 14"><circle cx="7" cy="7" r="6" stroke="#4d4d4d" stroke-width="1.600" fill="none"/><circle cx="7" cy="5.500" r="2.300" fill="#4d4d4d"/><path d="M2.800 10.800c.8-1.800 2.400-2.500 4.200-2.500s3.400.7 4.200 2.500c-1 1.400-2.500 2.200-4.200 2.200s-3.200-.8-4.200-2.200z" fill="#4d4d4d"/></svg><div class="t" id="r23" style="left:270.8px;top:679px;font-size:13.500px;color:#555;-webkit-text-stroke:.45px currentColor;letter-spacing:-0.04px"><b>:</b> Merin Thomas</div>
  <svg style="left:251px;top:708px" width="16" height="12" viewBox="0 0 16 12"><path d="M3.200 1.200C3.500.500 4 .200 4.700.200h6.600c.7 0 1.200.3 1.500 1l1.300 3.100c1 .2 1.700 1 1.700 2v3.200h-1.300v1.300c0 .6-.5 1-1.100 1s-1.100-.4-1.100-1V9.500H3.700v1.300c0 .6-.5 1-1.100 1s-1.100-.4-1.100-1V9.500H.200V6.300c0-1 .7-1.800 1.700-2zM4.800 1.800l-1 2.500h8.400l-1-2.500zM3 7.800a1 1 0 1 0 0-2 1 1 0 0 0 0 2zM13 7.800a1 1 0 1 0 0-2 1 1 0 0 0 0 2z" fill="#4d4d4d" fill-rule="evenodd"/></svg><div class="t" id="r24" style="left:270.8px;top:704px;font-size:13.500px;color:#555;letter-spacing:-0.14px"><b>:</b> Not Sold</div>
  <div class="t" id="n3" style="left:250.7px;top:749px;font-size:16px;color:#444;-webkit-text-stroke:.35px #444"><span id="n3_a" style=";letter-spacing:-0.02px">Con2 Soi2 </span><span id="n3_b" style="color:#7fb1e2;-webkit-text-stroke:.2px #7fb1e2;letter-spacing:-0.27px">Web Lead</span></div><svg style="left:529px;top:747px" width="18" height="24" viewBox="0 0 18 24"><path d="M4.500 10V6a4.500 4.500 0 0 1 9-.5" stroke="#cfcfcf" stroke-width="2.200" fill="none"/><path d="M.800 9.500h16.400V16c0 4-3.600 7-8.200 7.700C4.400 23 .800 20 .800 16z" fill="#6cb441"/><path d="M5.300 15.800l2.600 2.600 4.800-5" stroke="#fff" stroke-width="1.900" fill="none"/></svg>
  <svg style="left:253px;top:782px" width="11" height="11" viewBox="0 0 11 11"><path d="M2.300.300l1.900 2.500-1.100 1.300c.7 1.500 1.800 2.600 3.300 3.300l1.300-1.100 2.500 1.900c-.3 1.300-1.100 2.200-2.400 2.500C3.800 10.500.500 7.200.300 2.700.600 1.400 1.100.600 2.300.300z" fill="#4d4d4d"/></svg><div class="t" id="r31" style="left:270.8px;top:777px;font-size:13.500px;color:#555;letter-spacing:-0.08px"><b>:</b> (123) 321-1272</div>
  <svg style="left:251px;top:807px" width="14" height="11" viewBox="0 0 14 11"><rect x=".700" y=".700" width="12.600" height="9.600" rx="1.200" stroke="#4d4d4d" stroke-width="1.300" fill="none"/><path d="M1 2.300l6 4.400 6-4.400" stroke="#4d4d4d" stroke-width="1.300" fill="none"/></svg><div class="t" id="r32" style="left:270.8px;top:803px;font-size:13.500px;color:#555;letter-spacing:0.03px"><b>:</b> consoi2@mailinator.com</div>
  <div class="abs" style="left:239px;top:825px;width:333px;height:52px;background:#fff;border-top:1px solid #ddd"></div>
  <div class="t" id="show" style="left:250.7px;top:841px;font-size:13.500px;color:#444;letter-spacing:-0.32px">Show</div>
  <div class="abs" style="left:291px;top:836px;width:60px;height:29px;border:1px solid #ececec;border-radius:3px;background:#fff"></div>
  <div class="t" id="fifty" style="left:298.1px;top:841px;font-size:13.500px;color:#444;letter-spacing:0.02px">50</div>
  <svg style="left:336px;top:847px" width="10" height="7" viewBox="0 0 10 7"><path d="M1 1l4 4 4-4" stroke="#999" stroke-width="1.400" fill="none"/></svg>
  <div class="t" id="pg" style="left:441.2px;top:841px;font-size:13.500px;color:#444;letter-spacing:-0.23px">1 of 3</div>
  <div class="abs" style="left:484px;top:836px;width:77px;height:30px;border:1px solid #e2e2e2;border-radius:4px;background:#fff"></div>
  <div class="abs" style="left:527px;top:836px;width:1px;height:29px;background:#e2e2e2"></div>
  <svg style="left:503px;top:847px" width="6" height="10" viewBox="0 0 6 10"><path d="M6 0v10L0 5z" fill="#aaa"/></svg>
  <svg style="left:542px;top:847px" width="6" height="10" viewBox="0 0 6 10"><path d="M0 0v10l6-5z" fill="#aaa"/></svg>
  <div class="abs" id="rp" style="left:598px;top:218px;width:804px;height:660px;background:#fff;border:2px solid #d2d2d2;border-top:0;box-shadow:0 1px 2px rgba(0,0,0,.12)"></div>
  <div class="abs" id="rph" style="left:598px;top:218px;width:804px;height:128px;background:#4d88bf"></div>
  <div class="abs" style="left:613px;top:241px;width:80px;height:80px;border-radius:50%;border:2px solid #fff"></div>
  <div class="t" id="ma" style="left:613px;top:266px;width:80px;text-align:center;font-size:24px;line-height:32px;color:#fff">MA</div>
  <div class="abs" style="left:676px;top:294px;width:20px;height:20px;border-radius:50%;background:#f1edea;box-shadow:1px 2px 4px rgba(0,0,0,.3)"></div>
  <div class="t" id="ttl" style="left:703.8px;top:234px;line-height:32px;color:#fff;font-size:23.5px"><span id="ttl_a" style=";letter-spacing:0.26px">Mark Antony10 | </span><span id="ttl_b" style="color:#86bbf5;letter-spacing:-0.47px">Web Lead</span></div>
  <div class="abs" style="left:993px;top:241px;width:19px;height:19px;border-radius:3px;background:#7d94aa"></div>
  <div class="t" id="dbadge" style="left:993px;top:242px;width:19px;text-align:center;font-size:11px;line-height:19px;font-weight:bold;color:#fff">D</div>
  <div class="t" id="cust" style="left:703.8px;top:269px;font-size:14px;color:#fff"><b id="cust_a" style=";letter-spacing:0.09px">Customer at : </b><span id="cust_b" style=";letter-spacing:-0.52px">PHI DEALER1 LOCATION</span></div>
  <svg style="left:706px;top:295px" width="11" height="11" viewBox="0 0 11 11"><path d="M2.300.300l1.900 2.500-1.100 1.300c.7 1.500 1.800 2.600 3.300 3.300l1.300-1.100 2.500 1.900c-.3 1.300-1.100 2.200-2.400 2.500C3.800 10.500.500 7.200.300 2.700.600 1.400 1.100.600 2.300.300z" fill="#fff"/></svg>
  <div class="t" id="hp" style="left:723.8px;top:291px;font-size:14px;color:#fff;letter-spacing:-0.11px">: 8(804) 478-9778</div>
  <svg style="left:909px;top:295px" width="15" height="12" viewBox="0 0 15 12"><rect x=".700" y=".700" width="13.600" height="10.600" rx="1.200" stroke="#fff" stroke-width="1.300" fill="none"/><path d="M1 2.500l6.500 4.600L14 2.500" stroke="#fff" stroke-width="1.300" fill="none"/></svg>
  <div class="t" id="hm" style="left:928.7px;top:291px;font-size:14px;color:#fff;letter-spacing:0.04px">: Atdf21372391@yopmail..</div>
  <svg style="left:707px;top:315px" width="9" height="12" viewBox="0 0 9 12"><path d="M4.500 12C2 8.500 0 6.500 0 4.400a4.500 4.400 0 0 1 9 0C9 6.500 7 8.500 4.500 12z" fill="#fff"/><circle cx="4.500" cy="4.300" r="1.600" fill="#4d88bf"/></svg>
  <div class="t" id="hl" style="left:723.8px;top:311px;font-size:14px;color:#fff;letter-spacing:-0.14px">: United States</div>
  <svg style="left:1203px;top:245px" width="22" height="16" viewBox="0 0 22 16"><path d="M0 8C2.500 3 6.300.500 11 .500S19.500 3 22 8c-2.500 5-6.300 7.500-11 7.500S2.500 13 0 8z" fill="#fff"/><circle cx="11" cy="8" r="4.700" fill="#4d88bf"/><circle cx="11" cy="8" r="2.500" fill="#fff"/></svg>
  <div class="abs" style="left:1254px;top:233px;width:133px;height:40px;background:#fff;border-radius:4px"></div>
  <div class="t" id="la" style="left:1269.4px;top:243px;font-size:16px;color:#909090;letter-spacing:-0.27px">Lead Actions</div>
  <svg style="left:1362px;top:250px" width="10" height="7" viewBox="0 0 10 7"><path d="M1 1l4 4 4-4" stroke="#9a9a9a" stroke-width="1.300" fill="none"/></svg>
  <svg style="left:1182px;top:295px" width="17" height="12" viewBox="0 0 16 12" preserveAspectRatio="none"><path d="M3.200 1.200C3.500.500 4 .200 4.700.200h6.600c.7 0 1.200.3 1.500 1l1.300 3.100c1 .2 1.700 1 1.700 2v3.200h-1.300v1.300c0 .6-.5 1-1.100 1s-1.100-.4-1.100-1V9.500H3.700v1.300c0 .6-.5 1-1.100 1s-1.100-.4-1.100-1V9.500H.200V6.300c0-1 .7-1.800 1.700-2zM4.800 1.800l-1 2.500h8.400l-1-2.500zM3 7.800a1 1 0 1 0 0-2 1 1 0 0 0 0 2zM13 7.800a1 1 0 1 0 0-2 1 1 0 0 0 0 2z" fill="#fff" fill-rule="evenodd"/></svg>
  <div class="t" id="ns" style="left:1202.5px;top:291px;font-size:14px;color:#fff;letter-spacing:-0.11px">: Not Sold</div>
  <svg style="left:1334px;top:291px" width="15" height="20" viewBox="0 0 18 24" preserveAspectRatio="none"><path d="M4.500 10V6a4.500 4.500 0 0 1 9-.5" stroke="#bcd9f2" stroke-width="1.800" fill="none"/><path d="M.800 9.500h16.400V16c0 4-3.600 7-8.200 7.700C4.400 23 .800 20 .800 16z" fill="#6cb441"/><path d="M5.300 15.800l2.600 2.600 4.800-5" stroke="#fff" stroke-width="1.900" fill="none"/></svg>
  <div class="t" id="op" style="left:1354.0px;top:291px;font-size:14px;color:#fff;-webkit-text-stroke:.45px currentColor;letter-spacing:-0.39px">Open</div>
  <div class="abs" style="left:799px;top:346px;width:602px;height:47px;background:#fcfcfc;border-bottom:1px solid #e9e9e9"></div>
  <div class="abs" style="left:799px;top:346px;width:1px;height:47px;background:#e9e9e9"></div>
  <div class="abs" style="left:999px;top:346px;width:1px;height:47px;background:#e9e9e9"></div>
  <div class="abs" style="left:1199px;top:346px;width:1px;height:47px;background:#e9e9e9"></div>
  <div class="t" id="tb0" style="left:599px;top:360px;width:200px;text-align:center;font-size:15px;color:#2c5f94;-webkit-text-stroke:.4px #2c5f94;letter-spacing:-0.15px">Lead Detail</div>
  <div class="t" id="tb1" style="left:799px;top:360px;width:200px;text-align:center;font-size:15px;color:#444;letter-spacing:-0.38px">Open Events</div>
  <div class="t" id="tb2" style="left:999px;top:360px;width:200px;text-align:center;font-size:15px;color:#444;letter-spacing:-0.04px">Vehicle</div>
  <div class="t" id="tb3" style="left:1199px;top:360px;width:200px;text-align:center;font-size:15px;color:#444;letter-spacing:0.07px">History</div>
  <div class="abs" style="left:1391px;top:394px;width:10px;height:483px;background:#f1f1f1"></div>
  <div class="abs" style="left:1392px;top:394px;width:8px;height:180px;background:#a9a9a9;border-radius:4px"></div>
  <div class="abs" style="left:690px;top:435px;width:686px;height:0;border-top:1px dashed #dcdcdc"></div>
  <div class="abs" style="left:650px;top:419px;width:40px;height:40px;border-radius:50%;background:#4fa3e4;box-shadow:0 2px 4px rgba(0,0,0,.12)"></div>
  <svg style="left:661px;top:430px" width="18" height="18" viewBox="0 0 18 18"><path d="M2 16l.8-4.200 8.400-8.400 3.400 3.400-8.400 8.400z" fill="#fff" fill-opacity="1"/><path d="M12.200 2.400l1.200-1.200a1 1 0 0 1 1.400 0l2 2a1 1 0 0 1 0 1.400l-1.200 1.200z" fill="#fff" fill-opacity="1"/></svg>
  <div class="t" id="st0" style="left:620px;top:467px;width:100px;text-align:center;color:#444;font-size:13px;letter-spacing:-0.0px">Pending</div>
  <div class="abs" style="left:758px;top:419px;width:40px;height:40px;border-radius:50%;background:#b6c6d4;box-shadow:0 2px 4px rgba(0,0,0,.12)"></div>
  <svg style="left:769px;top:430px" width="18" height="18" viewBox="0 0 18 18"><path d="M2 16l.8-4.200 8.400-8.400 3.400 3.400-8.400 8.400z" fill="#fff" fill-opacity="0.75"/><path d="M12.200 2.400l1.200-1.200a1 1 0 0 1 1.400 0l2 2a1 1 0 0 1 0 1.400l-1.200 1.200z" fill="#fff" fill-opacity="0.75"/></svg>
  <div class="t" id="st1" style="left:728px;top:467px;width:100px;text-align:center;color:#444;font-size:13px;letter-spacing:-0.18px">Greet</div>
  <div class="abs" style="left:866px;top:419px;width:40px;height:40px;border-radius:50%;background:#b6c6d4;box-shadow:0 2px 4px rgba(0,0,0,.12)"></div>
  <svg style="left:877px;top:430px" width="18" height="18" viewBox="0 0 18 18"><path d="M2 16l.8-4.200 8.400-8.400 3.400 3.400-8.400 8.400z" fill="#fff" fill-opacity="0.75"/><path d="M12.200 2.400l1.200-1.200a1 1 0 0 1 1.400 0l2 2a1 1 0 0 1 0 1.400l-1.200 1.200z" fill="#fff" fill-opacity="0.75"/></svg>
  <div class="t" id="st2" style="left:836px;top:467px;width:100px;text-align:center;color:#444;font-size:13px;letter-spacing:-0.02px">Identify</div>
  <div class="abs" style="left:974px;top:419px;width:40px;height:40px;border-radius:50%;background:#b6c6d4;box-shadow:0 2px 4px rgba(0,0,0,.12)"></div>
  <svg style="left:985px;top:430px" width="18" height="18" viewBox="0 0 18 18"><path d="M2 16l.8-4.200 8.400-8.400 3.400 3.400-8.400 8.400z" fill="#fff" fill-opacity="0.75"/><path d="M12.200 2.400l1.200-1.200a1 1 0 0 1 1.400 0l2 2a1 1 0 0 1 0 1.400l-1.200 1.200z" fill="#fff" fill-opacity="0.75"/></svg>
  <div class="t" id="st3" style="left:944px;top:467px;width:100px;text-align:center;color:#444;font-size:13px;letter-spacing:-0.54px">Present</div>
  <div class="abs" style="left:1082px;top:419px;width:40px;height:40px;border-radius:50%;background:#b6c6d4;box-shadow:0 2px 4px rgba(0,0,0,.12)"></div>
  <svg style="left:1093px;top:430px" width="18" height="18" viewBox="0 0 18 18"><path d="M2 16l.8-4.200 8.400-8.400 3.400 3.400-8.400 8.400z" fill="#fff" fill-opacity="0.75"/><path d="M12.200 2.400l1.200-1.200a1 1 0 0 1 1.400 0l2 2a1 1 0 0 1 0 1.400l-1.200 1.200z" fill="#fff" fill-opacity="0.75"/></svg>
  <div class="t" id="st4" style="left:1052px;top:467px;width:100px;text-align:center;color:#444;font-size:13px;letter-spacing:0.06px">Sit Down</div>
  <div class="abs" style="left:1190px;top:419px;width:40px;height:40px;border-radius:50%;background:#b6c6d4;box-shadow:0 2px 4px rgba(0,0,0,.12)"></div>
  <svg style="left:1201px;top:430px" width="18" height="18" viewBox="0 0 18 18"><path d="M2 16l.8-4.200 8.400-8.400 3.400 3.400-8.400 8.400z" fill="#fff" fill-opacity="0.75"/><path d="M12.200 2.400l1.200-1.200a1 1 0 0 1 1.400 0l2 2a1 1 0 0 1 0 1.400l-1.200 1.200z" fill="#fff" fill-opacity="0.75"/></svg>
  <div class="t" id="st5" style="left:1160px;top:467px;width:100px;text-align:center;color:#444;font-size:13px;letter-spacing:0.05px">Write Up</div>
  <div class="abs" style="left:1298px;top:419px;width:40px;height:40px;border-radius:50%;background:#b6c6d4;box-shadow:0 2px 4px rgba(0,0,0,.12)"></div>
  <svg style="left:1309px;top:430px" width="18" height="18" viewBox="0 0 18 18"><path d="M2 16l.8-4.200 8.400-8.400 3.400 3.400-8.400 8.400z" fill="#fff" fill-opacity="0.75"/><path d="M12.200 2.400l1.200-1.200a1 1 0 0 1 1.400 0l2 2a1 1 0 0 1 0 1.400l-1.200 1.200z" fill="#fff" fill-opacity="0.75"/></svg>
  <div class="t" id="st6" style="left:1268px;top:467px;width:100px;text-align:center;color:#444;font-size:13px;letter-spacing:0.07px">Close</div>
  <div class="abs" style="left:616px;top:495px;width:760px;height:8px;background:#f1f1f1;border-radius:4px"></div>
  <div class="abs" style="left:616px;top:495px;width:594px;height:8px;background:#c1c1c1;border-radius:4px"></div>
  <div class="t" id="d1" style="left:624.5px;top:546px;font-size:14px;color:#4a4a4a"><b id="d1_a" style=";letter-spacing:-0.05px">This Lead is: </b><span id="d1_b" style=";letter-spacing:-0.64px">Open</span></div>
  <div class="t" id="d2" style="left:624.5px;top:586px;font-size:14px;color:#4a4a4a"><b id="d2_a" style=";letter-spacing:-0.22px">Step: </b><span id="d2_b" style=";letter-spacing:-0.14px">Pending</span></div>
  <div class="t" id="d3" style="left:624.5px;top:626px;font-size:14px;color:#4a4a4a"><b id="d3_a" style=";letter-spacing:-0.13px">Tag: </b><span id="d3_b" style=";letter-spacing:-0.17px">tag1</span></div>
  <div class="t" id="d4" style="left:624.5px;top:667px;font-size:14px;color:#4a4a4a"><b id="d4_a" style=";letter-spacing:0.08px">Location:</b></div>
  <div class="abs" style="left:685px;top:666px;width:134px;height:22px;border:2px solid #4b9ccb;border-radius:4px;background:#fff"></div>
  <div class="t" id="loc" style="left:685px;top:667px;width:134px;text-align:center;font-size:10.500px;color:#5fa6d2;letter-spacing:-0.19px">PHI DEALER1 LOCATION</div>
  <div class="t" id="d5" style="left:624.5px;top:708px;font-size:14px;color:#4a4a4a"><b id="d5_a" style=";letter-spacing:0.01px">Department: </b><span id="d5_b" style=";letter-spacing:-0.35px">Sales</span></div>
  <div class="t" id="d6" style="left:624.5px;top:790px;font-size:14px;color:#4a4a4a"><b id="d6_a" style=";letter-spacing:0.04px">Latest Note: </b><span id="d6_b" style=";letter-spacing:-0.07px">Test Web Lead //</span></div>
  <div class="t" id="d7" style="left:624.5px;top:810px;font-size:14px;color:#4a4a4a;letter-spacing:-0.01px">mweb@yopmail.com</div>
  <div class="t" id="e1" style="left:872.3px;top:546px;font-size:14px;color:#4a4a4a"><b id="e1_a" style=";letter-spacing:-0.11px">Created: </b><span id="e1_b" style=";letter-spacing:-0.16px">Jan 24, 2023 08:49 PM</span></div>
  <div class="t" id="e2" style="left:872.3px;top:586px;font-size:14px;color:#4a4a4a"><b id="e2_a" style=";letter-spacing:0.18px">Modified: </b><span id="e2_b" style=";letter-spacing:-0.16px">Jan 24, 2023 08:49 PM</span></div>
  <div class="t" id="e3" style="left:872.3px;top:626px;font-size:14px;color:#4a4a4a"><b id="e3_a" style=";letter-spacing:-0.05px">Dormant: </b><span id="e3_b" style=";letter-spacing:-0.16px">0 Day(s)</span></div>
  <div class="t" id="e4" style="left:872.3px;top:666px;font-size:14px;color:#4a4a4a"><b id="e4_a" style=";letter-spacing:-0.06px">Lead Age: </b><span id="e4_b" style=";letter-spacing:-0.28px">0 Day(s)</span></div>
  <div class="t" id="e5" style="left:872.3px;top:790px;font-size:14px;color:#4a4a4a"><b id="e5_a" style=";letter-spacing:-0.05px">Sold date: </b><span id="e5_b" style=";letter-spacing:-0.24px">Apr 10, 2019</span></div>
  <div class="t" id="e6" style="left:872.3px;top:830px;font-size:14px;color:#4a4a4a"><b id="e6_a" style=";letter-spacing:-0.11px">Delivered: </b><span id="e6_b" style=";letter-spacing:-0.18px">Apr 10, 2019</span></div>
  <div class="t" id="g1" style="left:1120.2px;top:548px;font-size:14px;color:#4a4a4a"><b id="g1_a" style=";letter-spacing:-0.25px">Sales Rep: </b><span id="g1_b" style=";letter-spacing:-0.02px">Merin Thomas</span></div>
  <div class="t" id="g2" style="left:1120.2px;top:592px;font-size:14px;color:#4a4a4a"><b id="g2_a" style=";letter-spacing:-0.52px">BDC Rep: </b><span id="g2_b" style=";letter-spacing:-0.11px">Please Transfer</span></div>
  <div class="t" id="g3" style="left:1120.2px;top:654px;font-size:14px;color:#4a4a4a"><b id="g3_a" style=";letter-spacing:0.03px">Originator: </b><span id="g3_b" style=";letter-spacing:-0.02px">Merin Thomas</span></div>
  <div class="t" id="g4" style="left:1120.2px;top:694px;font-size:14px;color:#4a4a4a"><b id="g4_a" style=";letter-spacing:-0.11px">Source: </b><span id="g4_b" style=";letter-spacing:-0.1px">Phi Test Vendor1 - API</span></div>
  <div class="t" id="g5" style="left:1120.2px;top:734px;font-size:14px;color:#4a4a4a"><b id="g5_a" style=";letter-spacing:-0.21px">DNC Status:</b></div>
  <svg style="left:1309px;top:546px" width="24" height="24" viewBox="0 0 24 24"><circle cx="12" cy="12" r="11.800" fill="#3f7fc2"/><path d="M7.500 16.500l.5-2.500 6-6 2 2-6 6z" stroke="#d7e6f5" stroke-width="1" fill="none"/><path d="M14.800 7.200l.8-.8 2 2-.8.800" stroke="#d7e6f5" stroke-width="1" fill="none"/></svg>
  <svg style="left:1309px;top:590px" width="24" height="24" viewBox="0 0 24 24"><circle cx="12" cy="12" r="11.800" fill="#3f7fc2"/><path d="M7.500 16.500l.5-2.500 6-6 2 2-6 6z" stroke="#d7e6f5" stroke-width="1" fill="none"/><path d="M14.800 7.200l.8-.8 2 2-.8.800" stroke="#d7e6f5" stroke-width="1" fill="none"/></svg>
  <svg style="left:813px;top:708px" width="24" height="24" viewBox="0 0 24 24"><circle cx="12" cy="12" r="11.800" fill="#3f7fc2"/><path d="M7.500 16.500l.5-2.500 6-6 2 2-6 6z" stroke="#d7e6f5" stroke-width="1" fill="none"/><path d="M14.800 7.200l.8-.8 2 2-.8.800" stroke="#d7e6f5" stroke-width="1" fill="none"/></svg>
  <svg style="left:765px;top:525px" width="74" height="74" viewBox="0 0 74 74"><circle cx="37" cy="37" r="34.300" stroke="#eaea2c" stroke-width="3" fill="rgba(255,255,200,.06)"/></svg>
  <svg style="left:799px;top:559px" width="13" height="19" viewBox="0 0 13 19"><path d="M1 1v14.500l3.500-3.200 2.300 5.400 2.300-1-2.300-5.300H11.500z" fill="#111" stroke="#fff" stroke-width="1.100" stroke-linejoin="round"/></svg>
</div>
</body>
</html>
